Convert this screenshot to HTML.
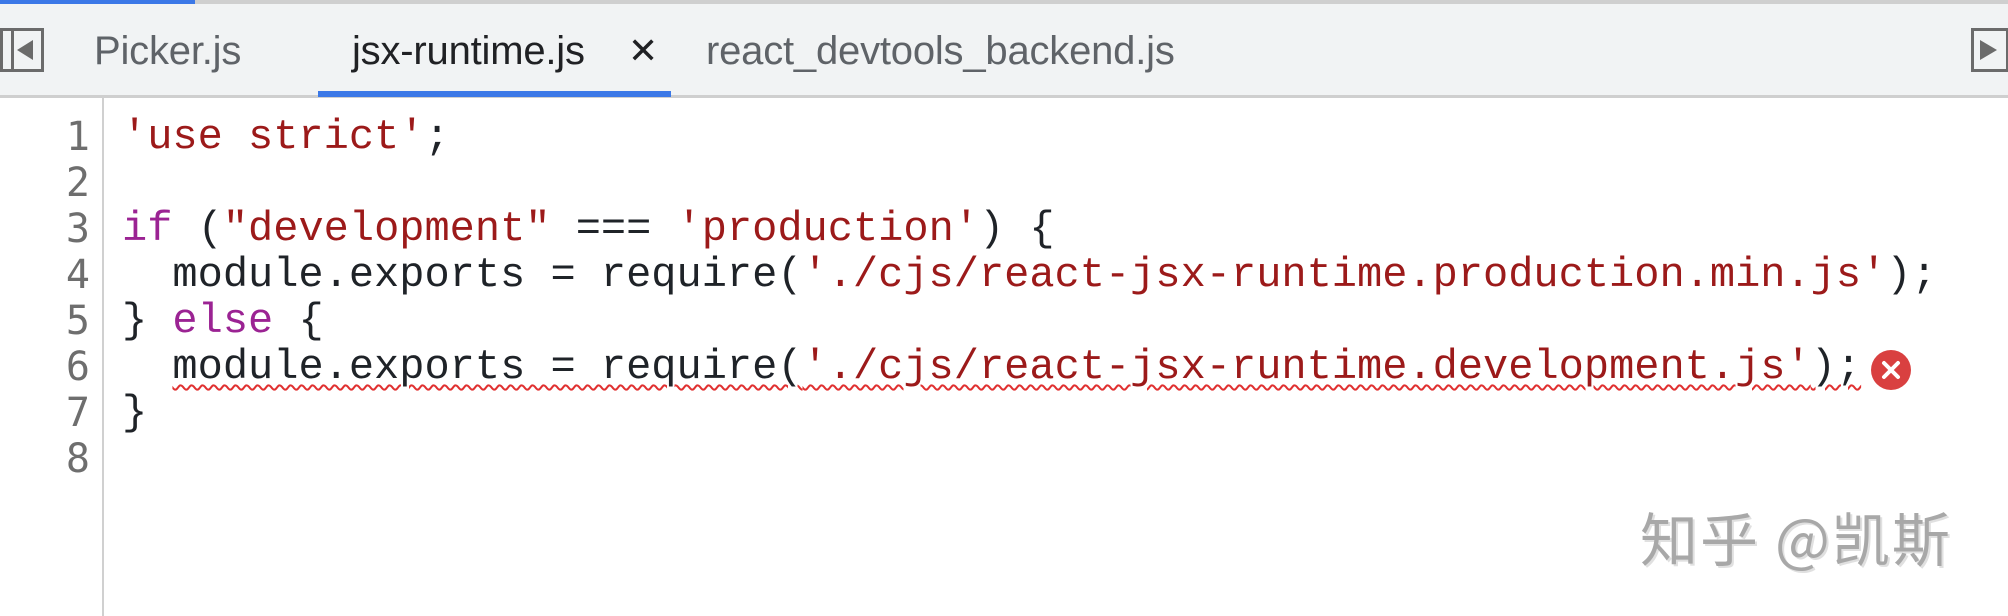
<!DOCTYPE html>
<html><head><meta charset="utf-8"><style>
html,body{margin:0;padding:0;width:2008px;height:616px;overflow:hidden;background:#fff;}
.top{position:absolute;left:0;top:0;width:2008px;height:4px;background:#cfcfcf;}
.topb{position:absolute;left:0;top:0;width:195px;height:4px;background:#3b78e7;}
.bar{position:absolute;left:0;top:4px;width:2008px;height:91px;background:#f1f3f4;border-bottom:3px solid #cfcfcf;}
.tab{position:absolute;top:28px;font-family:"Liberation Sans",sans-serif;font-size:40px;letter-spacing:-0.2px;color:#5f6368;line-height:46px;}
.act{color:#202124;}
.ul{position:absolute;left:318px;top:91px;width:353px;height:6px;background:#3b78e7;}
.btn{position:absolute;top:28px;width:32px;height:38px;border:3px solid #6b6b6b;background:#f1f3f4;}
.gut{position:absolute;left:102px;top:98px;width:2px;height:518px;background:#d0d0d0;}
.ln{position:absolute;left:0;width:90px;text-align:right;font-family:"DejaVu Sans Mono","Liberation Mono",monospace;font-size:40px;color:#6e6e6e;line-height:46px;}
.code{position:absolute;left:122px;top:114px;font-family:"Liberation Mono",monospace;font-size:42px;line-height:46px;white-space:pre;color:#1f2328;}
.s{color:#9c1a1a}.k{color:#9b2393}
.w{text-decoration:underline wavy #e03030;text-decoration-thickness:2px;text-underline-offset:6px;}
.err{position:absolute;left:1871px;top:350px;width:40px;height:40px;border-radius:50%;background:#d94040;}
.wm{position:absolute;left:1640px;top:494px;font-family:"Noto Sans CJK SC",sans-serif;font-size:58px;color:#a8a8a8;text-shadow:2px 2px 0 #e0e0e0;letter-spacing:2px;}
</style></head><body>
<div class="top"></div><div class="topb"></div>
<div class="bar"></div>
<div class="btn" style="left:0;width:38px;"><div style="position:absolute;left:8px;top:0;width:3px;height:38px;background:#6b6b6b"></div><div style="position:absolute;left:14px;top:9px;width:0;height:0;border-top:10px solid transparent;border-bottom:10px solid transparent;border-right:16px solid #6b6b6b"></div></div>
<div class="btn" style="left:1971px;"><div style="position:absolute;left:6px;top:9px;width:0;height:0;border-top:10px solid transparent;border-bottom:10px solid transparent;border-left:17px solid #6b6b6b"></div></div>
<div class="tab" style="left:94px">Picker.js</div>
<div class="tab act" style="left:352px">jsx-runtime.js</div>
<div class="tab act" style="left:628px;font-size:36px">✕</div>
<div class="tab" style="left:706px">react_devtools_backend.js</div>
<div class="ul"></div>
<div class="gut"></div>
<div class="ln" style="top:114px">1<br>2<br>3<br>4<br>5<br>6<br>7<br>8</div>
<div class="code"><span class="s">'use strict'</span>;

<span class="k">if</span> (<span class="s">"development"</span> === <span class="s">'production'</span>) {
  module.exports = require(<span class="s">'./cjs/react-jsx-runtime.production.min.js'</span>);
} <span class="k">else</span> {
  <span class="w">module.exports = require(<span class="s">'./cjs/react-jsx-runtime.development.js'</span>);</span>
}
</div>
<div class="err"><svg width="40" height="40"><path d="M13 13L27 27M27 13L13 27" stroke="#fff" stroke-width="4" stroke-linecap="round"/></svg></div>
<div class="wm">知乎 @凯斯</div>
</body></html>
